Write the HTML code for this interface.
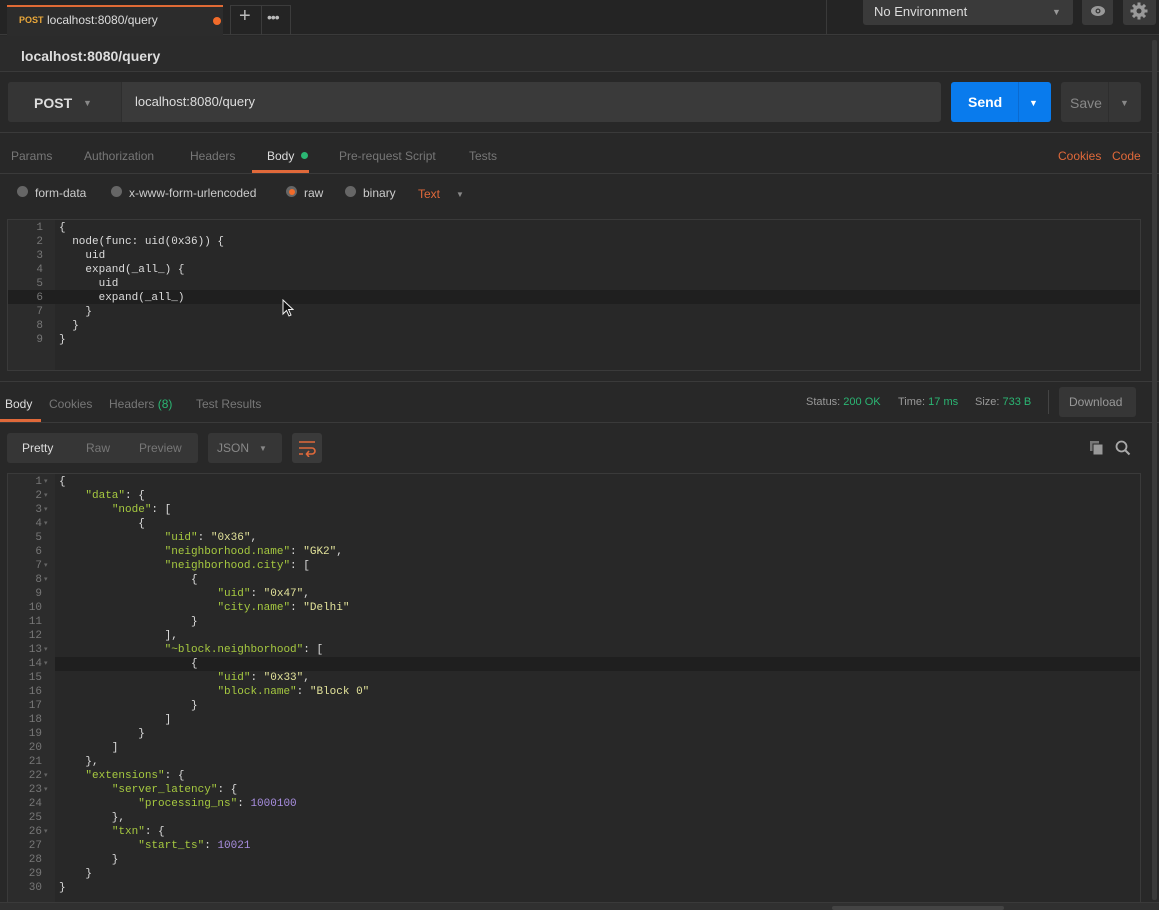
<!DOCTYPE html>
<html><head><meta charset="utf-8"><style>
*{box-sizing:border-box;margin:0;padding:0}
body{width:1159px;height:910px;background:#282828;font-family:"Liberation Sans",sans-serif;font-size:12px;color:#ccc;position:relative;overflow:hidden}
.a{position:absolute}
.ln{position:absolute;left:0;width:45px;text-align:right;color:#777;font-family:"Liberation Mono",monospace;font-size:11px;line-height:14px}
.code{position:absolute;left:59px;font-family:"Liberation Mono",monospace;font-size:11px;line-height:14px;color:#ddd;white-space:pre}
.k{color:#a6c940}.n{color:#a88ee0}
.code .s{color:#e2e29a}
.hl{position:absolute;left:0;right:0;height:14px;background:#1f1f1f}
</style></head><body>
<div class="a" style="left:0;top:0;width:1159px;height:35px;background:#242424;border-bottom:1px solid #3a3a3a"></div>
<div class="a" style="left:7px;top:5px;width:216px;height:31px;background:#2c2c2c;border-top:2px solid #e06a35"></div>
<div class="a" style="left:19px;top:15px;font-size:9px;color:#e9a73a;font-weight:bold">POST</div>
<div class="a" style="left:47px;top:13px;font-size:12px;color:#ddd">localhost:8080/query</div>
<div class="a" style="left:213px;top:17px;width:8px;height:8px;border-radius:50%;background:#f26b2a"></div>
<div class="a" style="left:230px;top:5px;width:32px;height:30px;border:1px solid #3c3c3c;border-bottom:none"></div>
<div class="a" style="left:262px;top:5px;width:29px;height:30px;border:1px solid #3c3c3c;border-bottom:none;border-left:none"></div>
<div class="a" style="left:239px;top:5px;font-size:20px;color:#bbb">+</div>
<div class="a" style="left:267px;top:9px;font-size:14px;color:#bbb;letter-spacing:-1px">•••</div>
<div class="a" style="left:826px;top:0;width:1px;height:35px;background:#3a3a3a"></div>
<div class="a" style="left:863px;top:0;width:210px;height:25px;background:#3a3a3a;border-radius:0 0 3px 3px"></div>
<div class="a" style="left:874px;top:4px;font-size:13px;color:#ddd">No Environment</div>
<div class="a" style="left:1052px;top:7px;font-size:9px;color:#999">▼</div>
<div class="a" style="left:1082px;top:0;width:31px;height:25px;background:#3a3a3a;border-radius:0 0 3px 3px"></div>
<svg class="a" style="left:1089px;top:4px" width="18" height="14" viewBox="0 0 18 14"><ellipse cx="9" cy="7" rx="7" ry="5" fill="#999"/><circle cx="9" cy="7" r="2.5" fill="#3a3a3a"/><circle cx="9" cy="7" r="1.2" fill="#999"/></svg>
<div class="a" style="left:1123px;top:0;width:33px;height:25px;background:#3a3a3a;border-radius:0 0 3px 3px"></div>
<svg class="a" style="left:1130px;top:2px" width="18" height="18" viewBox="0 0 18 18"><g fill="#999"><circle cx="9" cy="9" r="6"/><rect x="7.5" y="0.5" width="3" height="17"/><rect x="0.5" y="7.5" width="17" height="3"/><rect x="7.5" y="0.5" width="3" height="17" transform="rotate(45 9 9)"/><rect x="7.5" y="0.5" width="3" height="17" transform="rotate(-45 9 9)"/></g><circle cx="9" cy="9" r="2.5" fill="#3a3a3a"/></svg>
<div class="a" style="left:0;top:36px;width:1159px;height:36px;background:#2b2b2b;border-bottom:1px solid #3a3a3a"></div>
<div class="a" style="left:21px;top:48px;font-size:14px;font-weight:bold;color:#ddd">localhost:8080/query</div>
<div class="a" style="left:8px;top:82px;width:933px;height:40px;background:#3a3a3a;border-radius:3px"></div>
<div class="a" style="left:8px;top:82px;width:114px;height:40px;background:#353535;border-radius:3px 0 0 3px;border-right:1px solid #2e2e2e"></div>
<div class="a" style="left:34px;top:95px;font-size:14px;font-weight:bold;color:#ddd">POST</div>
<div class="a" style="left:83px;top:98px;font-size:9px;color:#888">▼</div>
<div class="a" style="left:135px;top:94px;font-size:13px;color:#ddd">localhost:8080/query</div>
<div class="a" style="left:951px;top:82px;width:100px;height:40px;background:#097bed;border-radius:3px"></div>
<div class="a" style="left:1018px;top:82px;width:1px;height:40px;background:#0a6ad0"></div>
<div class="a" style="left:968px;top:94px;font-size:14px;font-weight:bold;color:#fff">Send</div>
<div class="a" style="left:1029px;top:98px;font-size:9px;color:#fff">▼</div>
<div class="a" style="left:1061px;top:82px;width:80px;height:40px;background:#363636;border-radius:3px"></div>
<div class="a" style="left:1108px;top:82px;width:1px;height:40px;background:#2e2e2e"></div>
<div class="a" style="left:1070px;top:95px;font-size:14px;color:#888">Save</div>
<div class="a" style="left:1120px;top:98px;font-size:9px;color:#888">▼</div>
<div class="a" style="left:0;top:132px;width:1159px;height:1px;background:#3a3a3a"></div>
<div class="a" style="top:149px;left:11px;font-size:12px;color:#777">Params</div>
<div class="a" style="top:149px;left:84px;font-size:12px;color:#777">Authorization</div>
<div class="a" style="top:149px;left:190px;font-size:12px;color:#777">Headers</div>
<div class="a" style="top:149px;left:267px;font-size:12px;color:#ddd">Body</div>
<div class="a" style="top:152px;left:301px;width:7px;height:7px;border-radius:50%;background:#2bb673"></div>
<div class="a" style="top:149px;left:339px;font-size:12px;color:#777">Pre-request Script</div>
<div class="a" style="top:149px;left:469px;font-size:12px;color:#777">Tests</div>
<div class="a" style="top:149px;left:1058px;font-size:12px;color:#e0693a">Cookies</div>
<div class="a" style="top:149px;left:1112px;font-size:12px;color:#e0693a">Code</div>
<div class="a" style="left:0;top:173px;width:1159px;height:1px;background:#3a3a3a"></div>
<div class="a" style="left:252px;top:170px;width:57px;height:3px;background:#e0693a"></div>
<div class="a" style="left:17px;top:186px;width:11px;height:11px;border-radius:50%;background:#666"></div>
<div class="a" style="left:35px;top:186px;font-size:12px;color:#ccc">form-data</div>
<div class="a" style="left:111px;top:186px;width:11px;height:11px;border-radius:50%;background:#666"></div>
<div class="a" style="left:129px;top:186px;font-size:12px;color:#ccc">x-www-form-urlencoded</div>
<div class="a" style="left:286px;top:186px;width:11px;height:11px;border-radius:50%;background:#666"></div>
<div class="a" style="left:289px;top:189px;width:6px;height:6px;border-radius:50%;background:#f26b2a"></div>
<div class="a" style="left:304px;top:186px;font-size:12px;color:#ccc">raw</div>
<div class="a" style="left:345px;top:186px;width:11px;height:11px;border-radius:50%;background:#666"></div>
<div class="a" style="left:363px;top:186px;font-size:12px;color:#ccc">binary</div>
<div class="a" style="left:418px;top:187px;font-size:12px;color:#e0693a">Text</div>
<div class="a" style="left:456px;top:190px;font-size:8px;color:#888">▼</div>
<div class="a" style="left:7px;top:219px;width:1134px;height:152px;border:1px solid #3a3a3a;background:#282828;overflow:hidden">
 <div class="a" style="left:0;top:0;width:47px;height:152px;background:#2c2c2c"></div>
 <div class="hl" style="top:70px"></div>
 <div class="ln" style="top:1px;left:-10px">1<br>2<br>3<br>4<br>5<br>6<br>7<br>8<br>9</div>
 <div class="code" style="top:1px;left:51px">{
  node(func: uid(0x36)) {
    uid
    expand(_all_) {
      uid
      expand(_all_)
    }
  }
}</div>
</div>
<svg class="a" style="left:282px;top:299px" width="12" height="19" viewBox="0 0 12 19"><path d="M1 1 L1 15 L4.5 11.5 L7 17 L9 16 L6.5 10.5 L11 10.5 Z" fill="#111" stroke="#eee" stroke-width="1"/></svg>
<div class="a" style="left:0;top:381px;width:1159px;height:1px;background:#3a3a3a"></div>
<div class="a" style="top:397px;left:5px;font-size:12px;color:#ddd">Body</div>
<div class="a" style="top:397px;left:49px;font-size:12px;color:#777">Cookies</div>
<div class="a" style="top:397px;left:109px;font-size:12px;color:#777">Headers <span style="color:#2bb673">(8)</span></div>
<div class="a" style="top:397px;left:196px;font-size:12px;color:#777">Test Results</div>
<div class="a" style="left:0;top:419px;width:41px;height:3px;background:#e0693a"></div>
<div class="a" style="left:0;top:422px;width:1159px;height:1px;background:#3a3a3a"></div>
<div class="a" style="top:396px;left:806px;font-size:11px;color:#999">Status: <span style="color:#2bb673">200 OK</span></div>
<div class="a" style="top:396px;left:898px;font-size:11px;color:#999">Time: <span style="color:#2bb673">17 ms</span></div>
<div class="a" style="top:396px;left:975px;font-size:11px;color:#999">Size: <span style="color:#2bb673">733 B</span></div>
<div class="a" style="left:1048px;top:390px;width:1px;height:24px;background:#444"></div>
<div class="a" style="left:1059px;top:387px;width:77px;height:30px;background:#363636;border-radius:3px"></div>
<div class="a" style="left:1069px;top:395px;font-size:12px;color:#999">Download</div>
<div class="a" style="left:7px;top:433px;width:191px;height:30px;background:#363636;border-radius:3px"></div>
<div class="a" style="left:22px;top:441px;font-size:12px;color:#ddd">Pretty</div>
<div class="a" style="left:86px;top:441px;font-size:12px;color:#777">Raw</div>
<div class="a" style="left:139px;top:441px;font-size:12px;color:#777">Preview</div>
<div class="a" style="left:208px;top:433px;width:74px;height:30px;background:#363636;border-radius:3px"></div>
<div class="a" style="left:217px;top:441px;font-size:12px;color:#888">JSON</div>
<div class="a" style="left:259px;top:444px;font-size:8px;color:#888">▼</div>
<div class="a" style="left:292px;top:433px;width:30px;height:30px;background:#3a3a3a;border-radius:3px"></div>
<svg class="a" style="left:297px;top:439px" width="20" height="18" viewBox="0 0 20 18"><path d="M2 3H18M2 9H15a3 3 0 0 1 0 6H10M2 15H6M12 12L9.5 15L12 18" stroke="#e0693a" stroke-width="1.6" fill="none"/></svg>
<svg class="a" style="left:1089px;top:440px" width="16" height="16" viewBox="0 0 16 16"><rect x="1" y="1" width="9" height="10" fill="#777"/><rect x="4" y="4" width="10" height="11" fill="#999" stroke="#282828"/></svg>
<svg class="a" style="left:1115px;top:440px" width="16" height="16" viewBox="0 0 16 16"><circle cx="6.5" cy="6.5" r="5" stroke="#aaa" stroke-width="1.8" fill="none"/><path d="M10 10L14.5 14.5" stroke="#aaa" stroke-width="2"/></svg>
<div class="a" style="left:7px;top:473px;width:1134px;height:432px;border:1px solid #3a3a3a;background:#282828;overflow:hidden">
 <div class="a" style="left:0;top:0;width:47px;height:432px;background:#2c2c2c"></div>
 <div class="hl" style="top:183px;left:47px"></div>
 <div class="ln" style="top:1px;left:-10px;width:44px">1<br>2<br>3<br>4<br>5<br>6<br>7<br>8<br>9<br>10<br>11<br>12<br>13<br>14<br>15<br>16<br>17<br>18<br>19<br>20<br>21<br>22<br>23<br>24<br>25<br>26<br>27<br>28<br>29<br>30</div>
 <div class="a" style="left:36px;top:1px;font-size:7px;line-height:14px;color:#666">▾<br>▾<br>▾<br>▾<br><br><br>▾<br>▾<br><br><br><br><br>▾<br>▾<br><br><br><br><br><br><br><br>▾<br>▾<br><br><br>▾</div>
 <div class="code" style="top:1px;left:51px">{
    <span class="k">"data"</span>: {
        <span class="k">"node"</span>: [
            {
                <span class="k">"uid"</span>: <span class="s">"0x36"</span>,
                <span class="k">"neighborhood.name"</span>: <span class="s">"GK2"</span>,
                <span class="k">"neighborhood.city"</span>: [
                    {
                        <span class="k">"uid"</span>: <span class="s">"0x47"</span>,
                        <span class="k">"city.name"</span>: <span class="s">"Delhi"</span>
                    }
                ],
                <span class="k">"~block.neighborhood"</span>: [
                    {
                        <span class="k">"uid"</span>: <span class="s">"0x33"</span>,
                        <span class="k">"block.name"</span>: <span class="s">"Block 0"</span>
                    }
                ]
            }
        ]
    },
    <span class="k">"extensions"</span>: {
        <span class="k">"server_latency"</span>: {
            <span class="k">"processing_ns"</span>: <span class="n">1000100</span>
        },
        <span class="k">"txn"</span>: {
            <span class="k">"start_ts"</span>: <span class="n">10021</span>
        }
    }
}</div>
</div>
<div class="a" style="left:1152px;top:40px;width:5px;height:860px;background:#3a3a3a;border-radius:2px"></div>
<div class="a" style="left:0;top:902px;width:1159px;height:8px;background:#303030;border-top:1px solid #3a3a3a"></div>
<div class="a" style="left:832px;top:906px;width:172px;height:4px;background:#444;border-radius:2px"></div>
</body></html>
